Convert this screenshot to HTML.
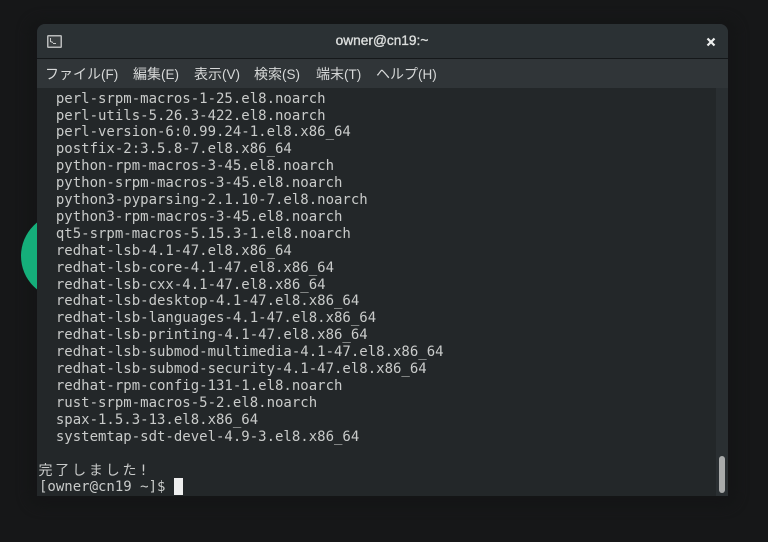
<!DOCTYPE html>
<html lang="ja">
<head>
<meta charset="utf-8">
<style>
html,body{margin:0;padding:0;width:768px;height:542px;overflow:hidden;background:#161718}
.abs{position:absolute}
#shadow{left:27px;top:18px;width:711px;height:490px;border-radius:16px;background:#141516;filter:blur(5px)}
#green{left:21px;top:212.5px;width:86px;height:86px;border-radius:50%;background:#15ae7a}
#win{left:37px;top:24px;width:691px;height:472px;background:#232729;border-radius:8px 8px 0 0;overflow:hidden}
#title{left:0;top:0;width:691px;height:34px;background:#2b3134;border-bottom:1px solid #15181a}
#title .t{position:absolute;left:0;right:1px;top:8px;text-align:center;font:400 13.7px/18px "Liberation Sans",sans-serif;-webkit-text-stroke:.35px #dcdedd;color:#dcdedd}
#menu{left:0;top:35px;width:691px;height:29px;background:#303538;font:14px/30px "Liberation Sans","Noto Sans CJK JP",sans-serif;color:#d6d8d8}
#menu span{position:absolute;top:0;white-space:nowrap}
#menu b{font-weight:400;font-size:13.5px}
#sb{left:679px;top:64px;width:12px;height:408px;background:#2a2f32}
#thumb{left:682px;top:432px;width:6px;height:37px;border-radius:3px;background:#a9abab}
#term{left:2px;top:66.6px;margin:0;font:14px/16.9px "DejaVu Sans Mono",monospace;color:#c9cbca;white-space:pre}
#done{left:1.5px;top:439px;font:14px/17px "DejaVu Sans Mono","Noto Sans CJK JP",monospace;color:#c9cbca;white-space:pre;letter-spacing:2.8px}
#prompt{left:2px;top:455px;font:14px/17px "DejaVu Sans Mono",monospace;color:#c9cbca;white-space:pre}
#cur{left:137px;top:454px;width:9px;height:17px;background:#eeeeee}
</style>
</head>
<body>
<div class="abs" id="shadow"></div>
<div class="abs" id="green"></div>
<div class="abs" id="win">
  <div class="abs" id="title">
    <svg class="abs" style="left:10px;top:11px" width="15" height="13" viewBox="0 0 15 13">
      <rect x=".75" y=".75" width="13.5" height="11.5" rx=".8" fill="#3a3f41" stroke="#b8baba" stroke-width="1.5"/>
      <path d="M3.5 3 L3.5 6.5 L6 7.5 M6 8.5 H9" fill="none" stroke="#c8caca" stroke-width="1"/>
    </svg>
    <div class="t">owner@cn19:~</div>
    <svg class="abs" style="left:669px;top:13px" width="10" height="10" viewBox="0 0 10 10">
      <path d="M1.5 1.5 L8.5 8.5 M8.5 1.5 L1.5 8.5" stroke="#eceeee" stroke-width="2.2" fill="none"/>
    </svg>
  </div>
  <div class="abs" id="menu">
    <span style="left:8px">ファイル<b>(F)</b></span>
    <span style="left:96px">編集<b>(E)</b></span>
    <span style="left:157px">表示<b>(V)</b></span>
    <span style="left:217px">検索<b>(S)</b></span>
    <span style="left:279px">端末<b>(T)</b></span>
    <span style="left:339px">ヘルプ<b>(H)</b></span>
  </div>
  <div class="abs" id="sb"></div>
  <div class="abs" id="thumb"></div>
<pre class="abs" id="term">  perl-srpm-macros-1-25.el8.noarch
  perl-utils-5.26.3-422.el8.noarch
  perl-version-6:0.99.24-1.el8.x86_64
  postfix-2:3.5.8-7.el8.x86_64
  python-rpm-macros-3-45.el8.noarch
  python-srpm-macros-3-45.el8.noarch
  python3-pyparsing-2.1.10-7.el8.noarch
  python3-rpm-macros-3-45.el8.noarch
  qt5-srpm-macros-5.15.3-1.el8.noarch
  redhat-lsb-4.1-47.el8.x86_64
  redhat-lsb-core-4.1-47.el8.x86_64
  redhat-lsb-cxx-4.1-47.el8.x86_64
  redhat-lsb-desktop-4.1-47.el8.x86_64
  redhat-lsb-languages-4.1-47.el8.x86_64
  redhat-lsb-printing-4.1-47.el8.x86_64
  redhat-lsb-submod-multimedia-4.1-47.el8.x86_64
  redhat-lsb-submod-security-4.1-47.el8.x86_64
  redhat-rpm-config-131-1.el8.noarch
  rust-srpm-macros-5-2.el8.noarch
  spax-1.5.3-13.el8.x86_64
  systemtap-sdt-devel-4.9-3.el8.x86_64</pre>
  <div class="abs" id="done">完了しました!</div>
  <div class="abs" id="prompt">[owner@cn19 ~]$</div>
  <div class="abs" id="cur"></div>
</div>
</body>
</html>
